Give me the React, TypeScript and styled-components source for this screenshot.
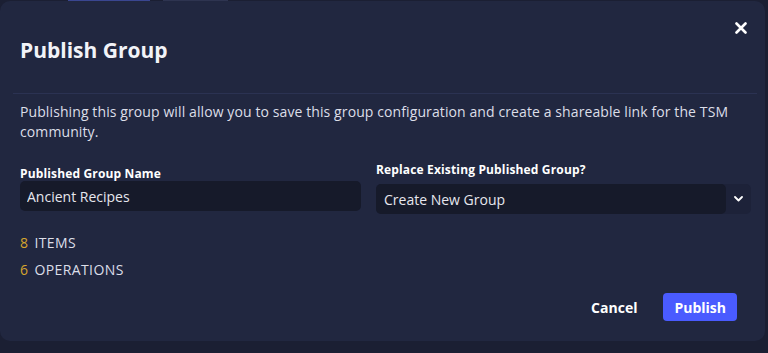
import React, { useState } from 'react';
import styled, { createGlobalStyle } from 'styled-components';

const GlobalStyle = createGlobalStyle`
  html, body {
    margin: 0;
    padding: 0;
    background: #1b1f33;
    font-family: 'Open Sans', 'Liberation Sans', sans-serif;
    color: #f2f3f8;
  }
`;

const Page = styled.div`
  width: 768px;
  height: 353px;
  overflow: hidden;
`;

/* the tab bar of the page behind peeks out above the dialog */
const BackTabs = styled.div`
  display: flex;
  height: 1px;
  padding-left: 68px;
  gap: 13px;
`;

const BackTab = styled.div<{ $width: number; $active?: boolean }>`
  width: ${p => p.$width}px;
  background: ${p => (p.$active ? '#3a4690' : '#2e3450')};
`;

const Dialog = styled.div`
  width: 765px;
  background: #212740;
  border-radius: 10px;
  display: flex;
  flex-direction: column;
`;

const Header = styled.div`
  height: 92px;
  display: flex;
  justify-content: space-between;
  padding: 0 20px;
  box-sizing: border-box;
`;

const Title = styled.h2`
  margin: 36px 0 0;
  font-size: 21px;
  line-height: 26px;
  font-weight: 700;
`;

const CloseButton = styled.button`
  margin-top: 19px;
  margin-right: -4px;
  width: 16px;
  height: 16px;
  padding: 0;
  border: none;
  background: none;
  color: #ffffff;
  display: flex;
  align-items: center;
  justify-content: center;
  cursor: pointer;
`;

const Divider = styled.hr`
  margin: 0 8px 0 13px;
  border: none;
  border-top: 1px solid #2b3252;
`;

const Body = styled.div`
  padding: 8px 14px 0 20px;
`;

const Description = styled.p`
  margin: 0;
  font-size: 14px;
  line-height: 20px;
  letter-spacing: 0.1px;
  color: #dcdee8;
`;

const FormRow = styled.div`
  display: grid;
  grid-template-columns: 341px 1fr;
  column-gap: 15px;
  margin-top: 25px;
`;

const Field = styled.div<{ $labelGap: number }>`
  display: flex;
  flex-direction: column;
  gap: ${p => p.$labelGap}px;
`;

const Label = styled.label<{ $lift?: number }>`
  font-size: 12px;
  line-height: 14px;
  font-weight: 700;
  letter-spacing: 0.15px;
  color: #ffffff;
  margin-top: ${p => -(p.$lift || 0)}px;
`;

const TextInput = styled.input`
  height: 30px;
  box-sizing: border-box;
  border: none;
  border-radius: 5px;
  background: #161a2a;
  color: #e6e7ee;
  font-family: inherit;
  font-size: 14px;
  padding: 0 7px;
  outline: none;
`;

const SelectBox = styled.div`
  height: 30px;
  display: flex;
  border-radius: 5px;
  background: #1d2239;
`;

const SelectValue = styled.div`
  flex: 1;
  display: flex;
  align-items: center;
  padding: 0 8px;
  background: #161a2a;
  border-radius: 5px;
  font-size: 14px;
  color: #e6e7ee;
`;

const Chevron = styled.div`
  width: 25px;
  display: flex;
  align-items: center;
  justify-content: center;
  color: #ffffff;
`;

const Stats = styled.div`
  margin-top: 20px;
  display: flex;
  flex-direction: column;
  gap: 9px;
`;

const Stat = styled.div`
  display: flex;
  gap: 6px;
  font-size: 14px;
  line-height: 18px;
  letter-spacing: 0.4px;
  color: #dcdee8;
`;

const StatCount = styled.span`
  color: #d6a52d;
`;

const Footer = styled.div`
  display: flex;
  justify-content: flex-end;
  gap: 15px;
  padding: 14px 28px 20px 0;
`;

const Button = styled.button<{ $primary?: boolean }>`
  height: 28px;
  padding: 0 11px;
  border: none;
  border-radius: 4px;
  font-family: inherit;
  font-size: 14px;
  font-weight: 700;
  color: #ffffff;
  background: ${p => (p.$primary ? '#4a5bff' : 'transparent')};
  cursor: pointer;
`;

export default function App() {
  const [name, setName] = useState('Ancient Recipes');

  return (
    <Page>
      <GlobalStyle />
      <BackTabs>
        <BackTab $width={82} $active />
        <BackTab $width={65} />
      </BackTabs>
      <Dialog>
        <Header>
          <Title>Publish Group</Title>
          <CloseButton aria-label="Close">
            <svg width="12" height="12" viewBox="0 0 12 12">
              <path d="M1.5 1.5 L10.5 10.5 M10.5 1.5 L1.5 10.5" stroke="currentColor" strokeWidth="2.6" strokeLinecap="round" />
            </svg>
          </CloseButton>
        </Header>
        <Divider />
        <Body>
          <Description>
            Publishing this group will allow you to save this group configuration and create a shareable link for the TSM community.
          </Description>
          <FormRow>
            <Field $labelGap={0}>
              <Label>Published Group Name</Label>
              <TextInput value={name} onChange={e => setName(e.target.value)} />
            </Field>
            <Field $labelGap={7}>
              <Label $lift={4}>Replace Existing Published Group?</Label>
              <SelectBox>
                <SelectValue>Create New Group</SelectValue>
                <Chevron>
                  <svg width="9" height="6" viewBox="0 0 9 6">
                    <path d="M1 1 L4.5 4.5 L8 1" fill="none" stroke="currentColor" strokeWidth="1.8" strokeLinecap="round" strokeLinejoin="round" />
                  </svg>
                </Chevron>
              </SelectBox>
            </Field>
          </FormRow>
          <Stats>
            <Stat><StatCount>8</StatCount>ITEMS</Stat>
            <Stat><StatCount>6</StatCount>OPERATIONS</Stat>
          </Stats>
        </Body>
        <Footer>
          <Button>Cancel</Button>
          <Button $primary>Publish</Button>
        </Footer>
      </Dialog>
    </Page>
  );
}
